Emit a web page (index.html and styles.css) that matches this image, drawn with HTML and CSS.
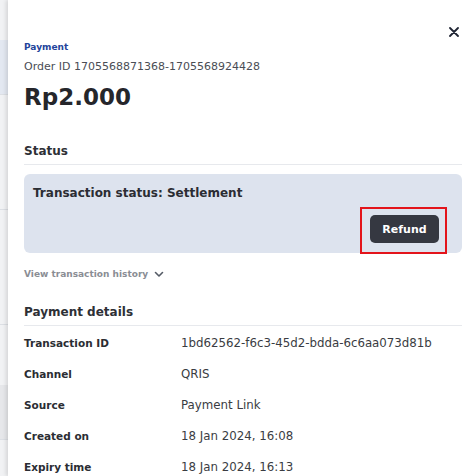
FILE: index.html
```html
<!DOCTYPE html>
<html lang="en">
  <head>
    <meta charset="utf-8">
    <title>Payment</title>
    <link rel="stylesheet" href="styles.css">
  </head>
  <body>
    <div class="page">
        <div class="backdrop">
            <div class="bd-row bd-hi"></div>
            <div class="bd-row"></div>
            <div class="bd-row"></div>
            <div class="bd-row bd-gray"></div>
        </div>
        <div class="panel">
            <div class="top">
                <button class="close-btn" aria-label="Close">
                    <svg width="10" height="10" viewBox="0 0 10 10"><path d="M1 1L9 9M9 1L1 9" stroke="#1f2433" stroke-width="1.8" stroke-linecap="round"/></svg>
                </button>
            </div>
            <p class="kicker">Payment</p>
            <p class="order-id">Order ID 1705568871368-1705568924428</p>
            <h1 class="amount">Rp2.000</h1>

            <h2 class="section-title">Status</h2>
            <div class="status-card">
                <p class="status-text">Transaction status: Settlement</p>
                <div class="status-actions">
                    <div class="highlight">
                        <button class="refund-btn">Refund</button>
                    </div>
                </div>
            </div>
            <button class="history-btn">View transaction history
                <svg width="10" height="7" viewBox="0 0 10 7"><path d="M1.5 1.5L5 5L8.5 1.5" fill="none" stroke="#555b66" stroke-width="1.6" stroke-linecap="round" stroke-linejoin="round"/></svg>
            </button>

            <h2 class="section-title">Payment details</h2>
            <div class="details">
                <div class="row"><span class="label">Transaction ID</span><span class="value">1bd62562-f6c3-45d2-bdda-6c6aa073d81b</span></div>
                <div class="row"><span class="label">Channel</span><span class="value">QRIS</span></div>
                <div class="row"><span class="label">Source</span><span class="value">Payment Link</span></div>
                <div class="row"><span class="label">Created on</span><span class="value">18 Jan 2024, 16:08</span></div>
                <div class="row"><span class="label">Expiry time</span><span class="value">18 Jan 2024, 16:13</span></div>
            </div>
        </div>
    </div>
  </body>
</html>
```

FILE: styles.css
```css
*{
    margin: 0;
    padding: 0;
    box-sizing: border-box;
}
body{
    background: #fff;
    font-family: "DejaVu Sans", sans-serif;
    color: #2b2d33;
    overflow: hidden;
}
.page{
    display: flex;
    height: 476px;
}
.backdrop{
    width: 8px;
    background: #f1f2f4;
    display: flex;
    flex-direction: column;
    padding-top: 40px;
    gap: 60px;
}
.bd-row{
    height: 55px;
    border-bottom: 1px solid #dcdfe4;
}
.bd-hi{
    background: #e3e8f1;
}
.bd-gray{
    background: #e6e7ea;
}
.panel{
    flex: 1;
    background: #fff;
    padding: 0 12px 0 16px;
    box-shadow: -2px 0 4px rgba(0, 0, 0, 0.12);
}
.top{
    display: flex;
    justify-content: flex-end;
    height: 40px;
    padding-top: 25px;
}
.close-btn{
    border: none;
    background: none;
    width: 14px;
    height: 14px;
    display: flex;
    align-items: center;
    justify-content: center;
    margin-right: 1px;
}
.kicker{
    color: #23449b;
    font-size: 9px;
    font-weight: bold;
    line-height: 14px;
}
.order-id{
    color: #4a4d55;
    font-size: 11px;
    line-height: 16px;
    margin-top: 5px;
}
.amount{
    font-size: 23px;
    line-height: 30px;
    margin-top: 7px;
    color: #25262b;
}
.section-title{
    font-size: 12px;
    font-weight: 600;
    line-height: 18px;
    color: #2e3036;
    padding-bottom: 4px;
    border-bottom: 1px solid #e7e9ed;
    margin-top: 30px;
}
.status-card{
    margin-top: 9px;
    background: #dde3ee;
    border-radius: 6px;
    padding: 10px 15px 0 9px;
    height: 79px;
}
.status-text{
    font-size: 12px;
    font-weight: 600;
    line-height: 18px;
    color: #2b2d33;
}
.status-actions{
    display: flex;
    justify-content: flex-end;
    margin-top: 5px;
}
.highlight{
    border: 2px solid #e3141b;
    padding: 6px 6px 9px 8px;
}
.refund-btn{
    background: #353841;
    color: #fff;
    border: none;
    border-radius: 5px;
    font-family: "DejaVu Sans", sans-serif;
    font-weight: bold;
    font-size: 11px;
    width: 69px;
    height: 28px;
}
.history-btn{
    display: flex;
    align-items: center;
    gap: 6px;
    border: none;
    background: none;
    font-family: "DejaVu Sans", sans-serif;
    font-size: 9px;
    font-weight: 600;
    color: #8a8d94;
    margin-top: 13px;
    height: 16px;
}
.history-btn + .section-title{
    margin-top: 21px;
}
.details{
    padding-top: 2px;
}
.row{
    display: flex;
    align-items: center;
    height: 30.8px;
    font-size: 11.8px;
}
.label{
    width: 157px;
    font-size: 10.5px;
    font-weight: 600;
    color: #2b2d33;
}
.value{
    color: #3a3c42;
}
```
